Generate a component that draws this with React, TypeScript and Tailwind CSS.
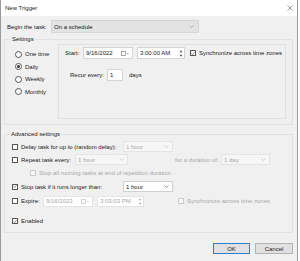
import React from "react";

function Chevron({ c = "#606060" }: { c?: string }) {
  return (
    <svg width="5" height="3" viewBox="0 0 5 3" className="shrink-0">
      <path d="M0.5 0.5 L2.5 2.5 L4.5 0.5" fill="none" stroke={c} strokeWidth="0.8" />
    </svg>
  );
}

function Cal({ c = "#808080" }: { c?: string }) {
  return (
    <svg width="8" height="5" viewBox="0 0 8 5" className="shrink-0">
      <rect x="0.5" y="0.5" width="4" height="4" fill="none" stroke={c} strokeWidth="0.7" />
      <path d="M5.8 2 L7.8 2 L6.8 3.2 Z" fill={c} />
    </svg>
  );
}

function Spin({ c = "#505050" }: { c?: string }) {
  return (
    <svg width="4" height="9" viewBox="0 0 4 9" className="shrink-0">
      <path d="M0.5 3.2 L2 1.2 L3.5 3.2 Z" fill={c} />
      <path d="M0.5 5.8 L2 7.8 L3.5 5.8 Z" fill={c} />
    </svg>
  );
}

function Check({ checked, disabled }: { checked?: boolean; disabled?: boolean }) {
  return (
    <div
      className={
        disabled
          ? "w-[6px] h-[6px] border border-[#cccccc] bg-[#f7f7f7] shrink-0 flex items-center justify-center"
          : "w-[6px] h-[6px] border border-[#555555] bg-white shrink-0 flex items-center justify-center"
      }
    >
      {checked && (
        <svg width="5" height="5" viewBox="0 0 5 5">
          <path d="M0.6 2.6 L1.9 3.9 L4.4 0.9" fill="none" stroke="#333" strokeWidth="0.7" />
        </svg>
      )}
    </div>
  );
}

function Radio({ checked }: { checked?: boolean }) {
  return (
    <div className="w-[7px] h-[7px] rounded-full border border-[#555555] bg-white shrink-0 flex items-center justify-center">
      {checked && <div className="w-[3px] h-[3px] rounded-full bg-[#333]" />}
    </div>
  );
}

export default function App() {
  return (
    <div
      className="w-[300px] h-[261px] bg-white overflow-hidden text-[6px] leading-[8px] text-[#1a1a1a]"
      style={{ fontFamily: '"Liberation Sans", Arial, sans-serif' }}
    >
      <div className="w-[298px] h-[261px] border-l border-r border-[#9a9a9a] bg-[#f0f0f0] flex flex-col">
        {/* title bar */}
        <div className="h-[16px] bg-white flex items-center justify-between pl-[4px] pr-[4px] shrink-0">
          <span className="text-[6px] text-[#222]">New Trigger</span>
          <svg width="6" height="6" viewBox="0 0 6 6">
            <path d="M0.5 0.5 L5.5 5.5 M5.5 0.5 L0.5 5.5" stroke="#555" strokeWidth="0.6" />
          </svg>
        </div>

        <div className="flex flex-col pt-[4px]">
          {/* begin row */}
          <div className="h-[13px] flex items-center pl-[6px]">
            <span className="w-[44px] shrink-0">Begin the task:</span>
            <div className="w-[148px] h-[13px] bg-[#e3e3e3] border border-[#d6d6d6] flex items-center justify-between pl-[2px] pr-[4px]">
              <span>On a schedule</span>
              <Chevron c="#999999" />
            </div>
          </div>

          {/* settings */}
          <fieldset className="ml-[3px] mt-[2px] w-[289px] border border-[#e2e2e2]">
            <legend className="ml-[6px] px-[1px] leading-[8px]">Settings</legend>
            <div className="flex h-[81px]">
              <div className="w-[53px] shrink-0 flex flex-col pt-[5px] pl-[10px]">
                {[
                  ["One time", false],
                  ["Daily", true],
                  ["Weekly", false],
                  ["Monthly", false],
                ].map(([t, c]) => (
                  <div key={t as string} className="h-[12.5px] flex items-center gap-[3px]">
                    <Radio checked={c as boolean} />
                    <span>{t as string}</span>
                  </div>
                ))}
              </div>
              <div className="mt-[1px] w-[228px] h-[75px] border border-[#e0e0e0] flex flex-col">
                <div className="mt-[2px] h-[12px] flex items-center pl-[6px]">
                  <span className="w-[18px] shrink-0">Start:</span>
                  <div className="w-[50px] h-[12px] bg-white border border-[#d4d4d4] flex items-center justify-between pl-[2px] pr-[3px]">
                    <span>9/16/2022</span>
                    <Cal />
                  </div>
                  <div className="ml-[4px] w-[48px] h-[12px] bg-white border border-[#d4d4d4] flex items-center justify-between pl-[2px] pr-[1px]">
                    <span>3:00:00 AM</span>
                    <Spin />
                  </div>
                  <div className="ml-[5px]">
                    <Check checked />
                  </div>
                  <span className="ml-[3px] whitespace-nowrap">Synchronize across time zones</span>
                </div>
                <div className="mt-[10px] h-[12px] flex items-center pl-[11px]">
                  <span className="w-[37px] shrink-0">Recur every:</span>
                  <div className="w-[16px] h-[12px] bg-white border border-[#d4d4d4] flex items-center pl-[2px]">
                    <span>1</span>
                  </div>
                  <span className="ml-[6px]">days</span>
                </div>
              </div>
            </div>
          </fieldset>

          {/* advanced */}
          <fieldset className="ml-[3px] mt-[5px] w-[289px] border border-[#e2e2e2] pb-[4.5px]">
            <legend className="ml-[5px] px-[1px] leading-[8px]">Advanced settings</legend>
            <div className="flex flex-col pt-[2px]">
              <div className="h-[13px] flex items-center pl-[7px]">
                <Check />
                <span className="ml-[3px] w-[102px] shrink-0 whitespace-nowrap">Delay task for up to (random delay):</span>
                <div className="w-[50px] h-[11px] bg-[#f6f6f6] border border-[#e4e4e4] flex items-center justify-between pl-[2px] pr-[3px] text-[#a8a8a8]">
                  <span>1 hour</span>
                  <Chevron c="#c4c4c4" />
                </div>
              </div>
              <div className="h-[13px] flex items-center pl-[7px]">
                <Check />
                <span className="ml-[3px] w-[54px] shrink-0 whitespace-nowrap">Repeat task every:</span>
                <div className="w-[53px] h-[11px] bg-[#f6f6f6] border border-[#e4e4e4] flex items-center justify-between pl-[2px] pr-[3px] text-[#a8a8a8]">
                  <span>1 hour</span>
                  <Chevron c="#c4c4c4" />
                </div>
                <span className="ml-[47px] w-[46px] shrink-0 whitespace-nowrap text-[#a8a8a8]">for a duration of:</span>
                <div className="w-[49px] h-[11px] bg-[#f6f6f6] border border-[#e4e4e4] flex items-center justify-between pl-[2px] pr-[3px] text-[#a8a8a8]">
                  <span>1 day</span>
                  <Chevron c="#c4c4c4" />
                </div>
              </div>
              <div className="h-[13px] flex items-center pl-[25px]">
                <Check disabled />
                <span className="ml-[3px] whitespace-nowrap text-[#a8a8a8]">Stop all running tasks at end of repetition duration</span>
              </div>
              <div className="h-[15px] flex items-center pl-[7px]">
                <Check checked />
                <span className="ml-[3px] w-[102px] shrink-0 whitespace-nowrap">Stop task if it runs longer than:</span>
                <div className="w-[50px] h-[11px] bg-white border border-[#d0d0d0] flex items-center justify-between pl-[2px] pr-[3px]">
                  <span>1 hour</span>
                  <Chevron c="#808080" />
                </div>
              </div>
              <div className="h-[14px] flex items-center pl-[7px]">
                <Check />
                <span className="ml-[3px] w-[22px] shrink-0">Expire:</span>
                <div className="w-[50px] h-[11px] bg-white border border-[#e4e4e4] flex items-center justify-between pl-[2px] pr-[3px] text-[#a8a8a8]">
                  <span>9/16/2023</span>
                  <Cal c="#c4c4c4" />
                </div>
                <div className="ml-[4px] w-[47px] h-[11px] bg-white border border-[#e4e4e4] flex items-center justify-between pl-[2px] pr-[1px] text-[#a8a8a8]">
                  <span>3:03:03 PM</span>
                  <Spin c="#b4b4b4" />
                </div>
                <div className="ml-[34px]">
                  <Check disabled />
                </div>
                <span className="ml-[3px] whitespace-nowrap text-[#a8a8a8]">Synchronize across time zones</span>
              </div>
              <div className="mt-[6.5px] h-[13px] flex items-center pl-[7px]">
                <Check checked />
                <span className="ml-[3px]">Enabled</span>
              </div>
            </div>
          </fieldset>

          {/* buttons */}
          <div className="mt-[10px] flex justify-end gap-[5px] pr-[4px]">
            <div className="w-[37px] h-[11px] bg-[#e1e1e1] border border-[#2a7fd0] flex items-center justify-center">
              OK
            </div>
            <div className="w-[38px] h-[11px] bg-[#e1e1e1] border border-[#b4b4b4] flex items-center justify-center">
              Cancel
            </div>
          </div>
        </div>
      </div>
    </div>
  );
}
